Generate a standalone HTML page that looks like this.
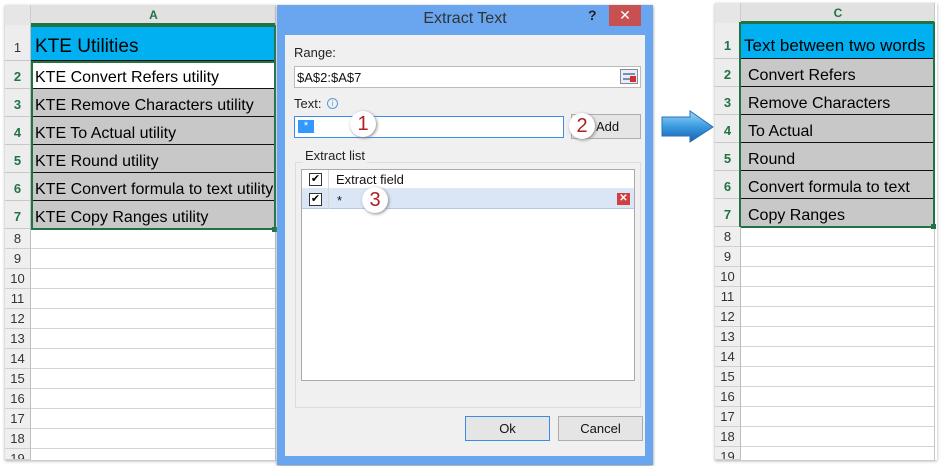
<!DOCTYPE html>
<html><head><meta charset="utf-8"><style>
*{margin:0;padding:0;box-sizing:border-box}
body{width:943px;height:466px;background:#fff;position:relative;overflow:hidden;font-family:"Liberation Sans",sans-serif}
.a{position:absolute}
.hd{background:#e6e6e6;color:#217346;font-size:12px;text-align:center}
.rn{position:absolute;background:#ededed;color:#217346;font-weight:bold;font-size:13px;text-align:center;border-bottom:1px solid #c8c8c8;border-right:1px solid #bdbdbd}
.rn2{position:absolute;background:#efefef;color:#333;font-size:13px;text-align:center;border-bottom:1px solid #d0d0d0;border-right:1px solid #bdbdbd}
.c{position:absolute;font-size:16px;color:#000;padding-left:4px;border-bottom:1px solid #111;white-space:nowrap;overflow:hidden}
.g{position:absolute;border-bottom:1px solid #d4d4d4}
</style></head><body>
<!-- left sheet -->
<div class="a" style="left:5px;top:5px;width:272px;height:455px;background:#fff;box-shadow:0 1px 3px #aaa"></div>
<div class="a hd" style="left:5px;top:5px;width:26px;height:20px;background:#e6e6e6;border-right:1px solid #ccc"></div>
<div class="a hd" style="left:31px;top:5px;width:245px;height:20px;line-height:20px;font-weight:bold;background:#e1e1e1;border-bottom:2px solid #217346">A</div>
<div class="a" style="left:275px;top:5px;width:1px;height:455px;background:#c6c6c6"></div>
<div class="rn" style="left:5px;top:25px;width:26px;height:36px;line-height:46px;color:#333;font-weight:normal">1</div>
<div class="a" style="left:31px;top:25px;width:245px;height:36px;background:#00b0f0;color:#000;font-size:19px;padding:11px 0 0 4px;border-bottom:1px solid #111">KTE Utilities</div>
<div class="rn" style="left:5px;top:61px;width:26px;height:28px;line-height:32px">2</div>
<div class="c" style="left:31px;top:61px;width:245px;height:28px;line-height:34px;background:#fff">KTE Convert Refers utility</div>
<div class="rn" style="left:5px;top:89px;width:26px;height:28px;line-height:32px">3</div>
<div class="c" style="left:31px;top:89px;width:245px;height:28px;line-height:34px;background:#c8c8c8">KTE Remove Characters utility</div>
<div class="rn" style="left:5px;top:117px;width:26px;height:28px;line-height:32px">4</div>
<div class="c" style="left:31px;top:117px;width:245px;height:28px;line-height:34px;background:#c8c8c8">KTE To Actual utility</div>
<div class="rn" style="left:5px;top:145px;width:26px;height:28px;line-height:32px">5</div>
<div class="c" style="left:31px;top:145px;width:245px;height:28px;line-height:34px;background:#c8c8c8">KTE Round utility</div>
<div class="rn" style="left:5px;top:173px;width:26px;height:28px;line-height:32px">6</div>
<div class="c" style="left:31px;top:173px;width:245px;height:28px;line-height:34px;background:#c8c8c8">KTE Convert formula to text utility</div>
<div class="rn" style="left:5px;top:201px;width:26px;height:28px;line-height:32px">7</div>
<div class="c" style="left:31px;top:201px;width:245px;height:28px;line-height:34px;background:#c8c8c8;border-bottom:none">KTE Copy Ranges utility</div>
<div class="a" style="left:31px;top:61px;width:245px;height:169px;border:2px solid #217346"></div>
<div class="a" style="left:272px;top:227px;width:5px;height:5px;background:#217346"></div>
<div class="a" style="left:31px;top:25px;width:245px;height:36px;border-top:2px solid #217346;border-right:2px solid #217346"></div>
<!-- dialog -->
<div class="a" style="left:277px;top:5px;width:376px;height:460px;background:#6aa5f0;box-shadow:0 1px 3px #888"></div>
<div class="a" style="left:277px;top:10px;width:376px;text-align:center;font-size:16px;color:#333">Extract Text</div>
<div class="a" style="left:588px;top:7px;font-size:14px;font-weight:bold;color:#222">?</div>
<div class="a" style="left:609px;top:5px;width:32px;height:21px;background:#c75050;color:#fff;text-align:center;font-size:14px;line-height:21px">✕</div>
<div class="a" style="left:285px;top:35px;width:360px;height:421px;background:#f0f0f0"></div>
<div class="a" style="left:294px;top:45px;font-size:13px;color:#222">Range:</div>
<div class="a" style="left:294px;top:66px;width:347px;height:22px;background:#fff;border:1px solid #bbb;font-size:13px;padding:3px 2px;color:#111">$A$2:$A$7</div>
<div class="a" style="left:620px;top:69px;width:18px;height:15px;background:#e6eef8;border:1px solid #889"><div class="a" style="left:2px;top:3px;width:12px;height:7px;border-top:2px solid #7790b0;border-bottom:2px solid #7790b0"></div><div class="a" style="left:9px;top:6px;width:6px;height:6px;background:#d03030"></div></div>
<div class="a" style="left:294px;top:96px;font-size:13px;color:#222">Text:</div>
<div class="a" style="left:327px;top:98px;width:11px;height:11px;border:1px solid #5b9bd5;border-radius:50%;font-size:8px;color:#5b9bd5;text-align:center;line-height:9px">i</div>
<div class="a" style="left:294px;top:116px;width:270px;height:22px;background:#fff;border:1px solid #3c8ce6"></div>
<div class="a" style="left:298px;top:120px;width:16px;height:13px;background:#3399ff;color:#fff;font-size:11px;text-align:center">*</div>
<div class="a" style="left:571px;top:114px;width:70px;height:25px;background:#e5e5e5;border:1px solid #adadad;font-size:13px;line-height:23px;padding-left:24px;color:#111">Add</div>
<div class="a" style="left:295px;top:162px;width:346px;height:246px;border:1px solid #dcdcdc"></div>
<div class="a" style="left:303px;top:148px;font-size:13px;color:#222;background:#f0f0f0;padding:0 2px">Extract list</div>
<div class="a" style="left:301px;top:169px;width:334px;height:212px;background:#fff;border:1px solid #aaa"></div>
<div class="a" style="left:302px;top:170px;width:332px;height:19px;border-bottom:1px solid #e0e8f4"></div>
<div class="a" style="left:302px;top:189px;width:332px;height:20px;background:#dae6f6;border-bottom:1px solid #b8c8e0"></div>
<div class="a" style="left:328px;top:170px;width:1px;height:39px;background:#d8d8d8"></div>
<div class="a" style="left:309px;top:173px;width:13px;height:13px;border:1px solid #333;background:#fff;font-size:11px;line-height:11px;text-align:center">✔</div>
<div class="a" style="left:309px;top:193px;width:13px;height:13px;border:1px solid #333;background:#fff;font-size:11px;line-height:11px;text-align:center">✔</div>
<div class="a" style="left:336px;top:172px;font-size:13px;color:#111">Extract field</div>
<div class="a" style="left:337px;top:193px;font-size:13px;color:#111">*</div>
<div class="a" style="left:617px;top:193px;width:13px;height:12px;background:#d04040;color:#fff;font-size:10px;text-align:center;line-height:12px;font-weight:bold">✕</div>
<div class="a" style="left:465px;top:416px;width:85px;height:25px;background:#e5e5e5;border:1px solid #3c8ce6;font-size:13px;text-align:center;line-height:23px;color:#111">Ok</div>
<div class="a" style="left:558px;top:416px;width:85px;height:25px;background:#e5e5e5;border:1px solid #adadad;font-size:13px;text-align:center;line-height:23px;color:#111">Cancel</div>
<!-- numbered circles -->
<div class="a" style="left:350px;top:111px;width:26px;height:26px;border-radius:50%;background:#fff;box-shadow:1px 1px 3px #888;color:#b02020;font-size:20px;text-align:center;line-height:26px">1</div>
<div class="a" style="left:569px;top:113px;width:26px;height:26px;border-radius:50%;background:#fff;box-shadow:1px 1px 3px #888;color:#b02020;font-size:20px;text-align:center;line-height:26px">2</div>
<div class="a" style="left:362px;top:187px;width:26px;height:26px;border-radius:50%;background:#fff;box-shadow:1px 1px 3px #888;color:#b02020;font-size:20px;text-align:center;line-height:26px">3</div>
<!-- arrow -->
<svg class="a" style="left:660px;top:110px" width="56" height="34"><defs><linearGradient id="ag" x1="0" y1="0" x2="0" y2="1"><stop offset="0" stop-color="#9fd8f8"/><stop offset="0.5" stop-color="#3a9be0"/><stop offset="1" stop-color="#1a60b0"/></linearGradient></defs><path d="M2 7 H30 V1 L53 17 L30 32 V26 H2 Z" fill="url(#ag)" stroke="#2a70b8" stroke-width="1"/></svg>
<!-- right sheet -->
<div class="a" style="left:715px;top:3px;width:222px;height:457px;background:#fff;box-shadow:0 1px 3px #aaa"></div>
<div class="a" style="left:715px;top:3px;width:26px;height:20px;background:#e6e6e6;border-right:1px solid #ccc"></div>
<div class="a hd" style="left:741px;top:3px;width:194px;height:20px;line-height:20px;font-weight:bold;background:#e1e1e1;border-bottom:2px solid #217346">C</div>
<div class="a" style="left:934px;top:3px;width:1px;height:457px;background:#c6c6c6"></div>
<div class="rn" style="left:715px;top:23px;width:26px;height:36px;line-height:46px">1</div>
<div class="a" style="left:741px;top:23px;width:194px;height:36px;background:#00b0f0;font-size:17px;padding:13px 0 0 3px;border-bottom:1px solid #111;white-space:nowrap;overflow:hidden">Text between two words</div>
<div class="rn" style="left:715px;top:59px;width:26px;height:28px;line-height:32px">2</div>
<div class="c" style="left:741px;top:59px;width:194px;height:28px;line-height:34px;background:#c8c8c8;padding-left:7px">Convert Refers</div>
<div class="rn" style="left:715px;top:87px;width:26px;height:28px;line-height:32px">3</div>
<div class="c" style="left:741px;top:87px;width:194px;height:28px;line-height:34px;background:#c8c8c8;padding-left:7px">Remove Characters</div>
<div class="rn" style="left:715px;top:115px;width:26px;height:28px;line-height:32px">4</div>
<div class="c" style="left:741px;top:115px;width:194px;height:28px;line-height:34px;background:#c8c8c8;padding-left:7px">To Actual</div>
<div class="rn" style="left:715px;top:143px;width:26px;height:28px;line-height:32px">5</div>
<div class="c" style="left:741px;top:143px;width:194px;height:28px;line-height:34px;background:#c8c8c8;padding-left:7px">Round</div>
<div class="rn" style="left:715px;top:171px;width:26px;height:28px;line-height:32px">6</div>
<div class="c" style="left:741px;top:171px;width:194px;height:28px;line-height:34px;background:#c8c8c8;padding-left:7px">Convert formula to text</div>
<div class="rn" style="left:715px;top:199px;width:26px;height:28px;line-height:32px">7</div>
<div class="c" style="left:741px;top:199px;width:194px;height:28px;line-height:34px;background:#c8c8c8;padding-left:7px;border-bottom:none">Copy Ranges</div>
<div class="a" style="left:739px;top:22px;width:196px;height:206px;border:2px solid #217346"></div>
<div class="a" style="left:931px;top:224px;width:5px;height:5px;background:#217346"></div>
<!-- empty rows -->
<div class="rn2" style="left:5px;top:229px;width:26px;height:20px;line-height:20px">8</div><div class="g" style="left:31px;top:229px;width:244px;height:20px"></div>
<div class="rn2" style="left:5px;top:249px;width:26px;height:20px;line-height:20px">9</div><div class="g" style="left:31px;top:249px;width:244px;height:20px"></div>
<div class="rn2" style="left:5px;top:269px;width:26px;height:20px;line-height:20px">10</div><div class="g" style="left:31px;top:269px;width:244px;height:20px"></div>
<div class="rn2" style="left:5px;top:289px;width:26px;height:20px;line-height:20px">11</div><div class="g" style="left:31px;top:289px;width:244px;height:20px"></div>
<div class="rn2" style="left:5px;top:309px;width:26px;height:20px;line-height:20px">12</div><div class="g" style="left:31px;top:309px;width:244px;height:20px"></div>
<div class="rn2" style="left:5px;top:329px;width:26px;height:20px;line-height:20px">13</div><div class="g" style="left:31px;top:329px;width:244px;height:20px"></div>
<div class="rn2" style="left:5px;top:349px;width:26px;height:20px;line-height:20px">14</div><div class="g" style="left:31px;top:349px;width:244px;height:20px"></div>
<div class="rn2" style="left:5px;top:369px;width:26px;height:20px;line-height:20px">15</div><div class="g" style="left:31px;top:369px;width:244px;height:20px"></div>
<div class="rn2" style="left:5px;top:389px;width:26px;height:20px;line-height:20px">16</div><div class="g" style="left:31px;top:389px;width:244px;height:20px"></div>
<div class="rn2" style="left:5px;top:409px;width:26px;height:20px;line-height:20px">17</div><div class="g" style="left:31px;top:409px;width:244px;height:20px"></div>
<div class="rn2" style="left:5px;top:429px;width:26px;height:20px;line-height:20px">18</div><div class="g" style="left:31px;top:429px;width:244px;height:20px"></div>
<div class="rn2" style="left:5px;top:449px;width:26px;height:11px;line-height:20px;overflow:hidden">19</div>
<div class="rn2" style="left:715px;top:227px;width:26px;height:20px;line-height:20px">8</div><div class="g" style="left:741px;top:227px;width:193px;height:20px"></div>
<div class="rn2" style="left:715px;top:247px;width:26px;height:20px;line-height:20px">9</div><div class="g" style="left:741px;top:247px;width:193px;height:20px"></div>
<div class="rn2" style="left:715px;top:267px;width:26px;height:20px;line-height:20px">10</div><div class="g" style="left:741px;top:267px;width:193px;height:20px"></div>
<div class="rn2" style="left:715px;top:287px;width:26px;height:20px;line-height:20px">11</div><div class="g" style="left:741px;top:287px;width:193px;height:20px"></div>
<div class="rn2" style="left:715px;top:307px;width:26px;height:20px;line-height:20px">12</div><div class="g" style="left:741px;top:307px;width:193px;height:20px"></div>
<div class="rn2" style="left:715px;top:327px;width:26px;height:20px;line-height:20px">13</div><div class="g" style="left:741px;top:327px;width:193px;height:20px"></div>
<div class="rn2" style="left:715px;top:347px;width:26px;height:20px;line-height:20px">14</div><div class="g" style="left:741px;top:347px;width:193px;height:20px"></div>
<div class="rn2" style="left:715px;top:367px;width:26px;height:20px;line-height:20px">15</div><div class="g" style="left:741px;top:367px;width:193px;height:20px"></div>
<div class="rn2" style="left:715px;top:387px;width:26px;height:20px;line-height:20px">16</div><div class="g" style="left:741px;top:387px;width:193px;height:20px"></div>
<div class="rn2" style="left:715px;top:407px;width:26px;height:20px;line-height:20px">17</div><div class="g" style="left:741px;top:407px;width:193px;height:20px"></div>
<div class="rn2" style="left:715px;top:427px;width:26px;height:20px;line-height:20px">18</div><div class="g" style="left:741px;top:427px;width:193px;height:20px"></div>
<div class="rn2" style="left:715px;top:447px;width:26px;height:13px;line-height:20px;overflow:hidden">19</div>
</body></html>
